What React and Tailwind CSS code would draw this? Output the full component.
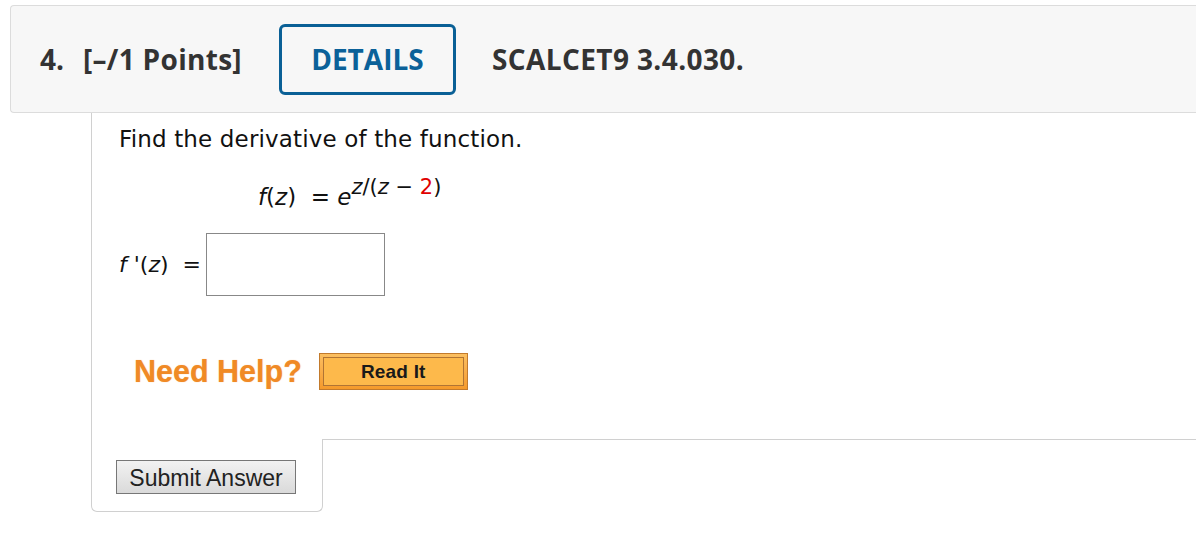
import React from 'react'

const verdana = { fontFamily: '"DejaVu Sans", Verdana, sans-serif' }
const arial = { fontFamily: '"Liberation Sans", Arial, sans-serif' }

// ── Cabeçalho da questão
function QuestionHeader() {
  return (
    <div className="flex h-[108px] items-center rounded-l-[4px] border border-r-0 border-[#dcdcdc] bg-[#f7f7f7] pl-[29px] text-[#333]"
      style={{ fontFamily: '"Open Sans", sans-serif' }}>
      <span className="text-[28px] font-bold">4.</span>
      <span className="ml-[19px] text-[28px] font-bold tracking-[0.3px]">[–/1 Points]</span>
      <button className="ml-[37px] flex h-[71px] w-[177px] items-center justify-center rounded-[6px] border-[3px] border-[#0a6096] text-[28px] font-bold text-[#0b6199]">
        DETAILS
      </button>
      <span className="ml-[36px] text-[28px] font-bold tracking-[0.4px]">SCALCET9 3.4.030.</span>
    </div>
  )
}

function ReadItButton() {
  return (
    <button className="ml-[17px] h-[37px] w-[149px] border border-[#c27a2c] bg-gradient-to-b from-[#fbbf60] to-[#f59a2a] p-[3px]">
      <div className="flex h-full w-full items-center justify-center border border-[#b07434] bg-[#fdb94b] text-[19px] font-bold tracking-[0.2px] text-[#1a1a1a]"
        style={arial}>
        Read It
      </div>
    </button>
  )
}

export default function App() {
  return (
    <div className="h-[538px] w-full overflow-hidden bg-white pl-[10px] pt-[5px]">
      <QuestionHeader />

      <div className="ml-[81px]">
        {/* Enunciado */}
        <div className="h-[326px] border-l border-[#d0d0d0] pl-[27px] pt-[11px] text-[#111]" style={verdana}>
          <p className="text-[23px] leading-[30px] tracking-[0.15px]">Find the derivative of the function.</p>

          <p className="ml-[139px] mt-[28px] text-[23px] leading-[30px]">
            <i>f</i>(<i>z</i>) &nbsp;=&nbsp;<i>e</i>
            <sup className="relative -top-[11px] text-[21px]">
              <i>z</i>/(<i>z</i> − <span className="text-[#e00000]">2</span>)
            </sup>
          </p>

          <div className="mt-[21px] flex items-center">
            <span className="text-[22px]"><i>f</i> '(<i>z</i>) &nbsp;=</span>
            <input className="ml-[5px] h-[63px] w-[179px] border border-[#888] bg-white outline-none" />
          </div>

          <div className="ml-[15px] mt-[53px] flex items-center">
            <span className="text-[30.5px] font-bold text-[#f08a26] [text-shadow:0_0_1px_rgba(240,138,38,0.6)]"
              style={arial}>
              Need Help?
            </span>
            <ReadItButton />
          </div>
        </div>

        {/* Rodapé com botão de envio */}
        <div className="flex">
          <div className="h-[73px] w-[232px] rounded-b-[6px] border-x border-b border-[#d0d0d0] pl-[24px] pt-[21px]">
            <button className="h-[34px] w-[180px] border border-[#777] bg-gradient-to-b from-[#f2f2f2] to-[#dadada] text-[23px] text-[#222]"
              style={arial}>
              Submit Answer
            </button>
          </div>
          <div className="flex-1 border-t border-[#d0d0d0]" />
        </div>
      </div>
    </div>
  )
}
